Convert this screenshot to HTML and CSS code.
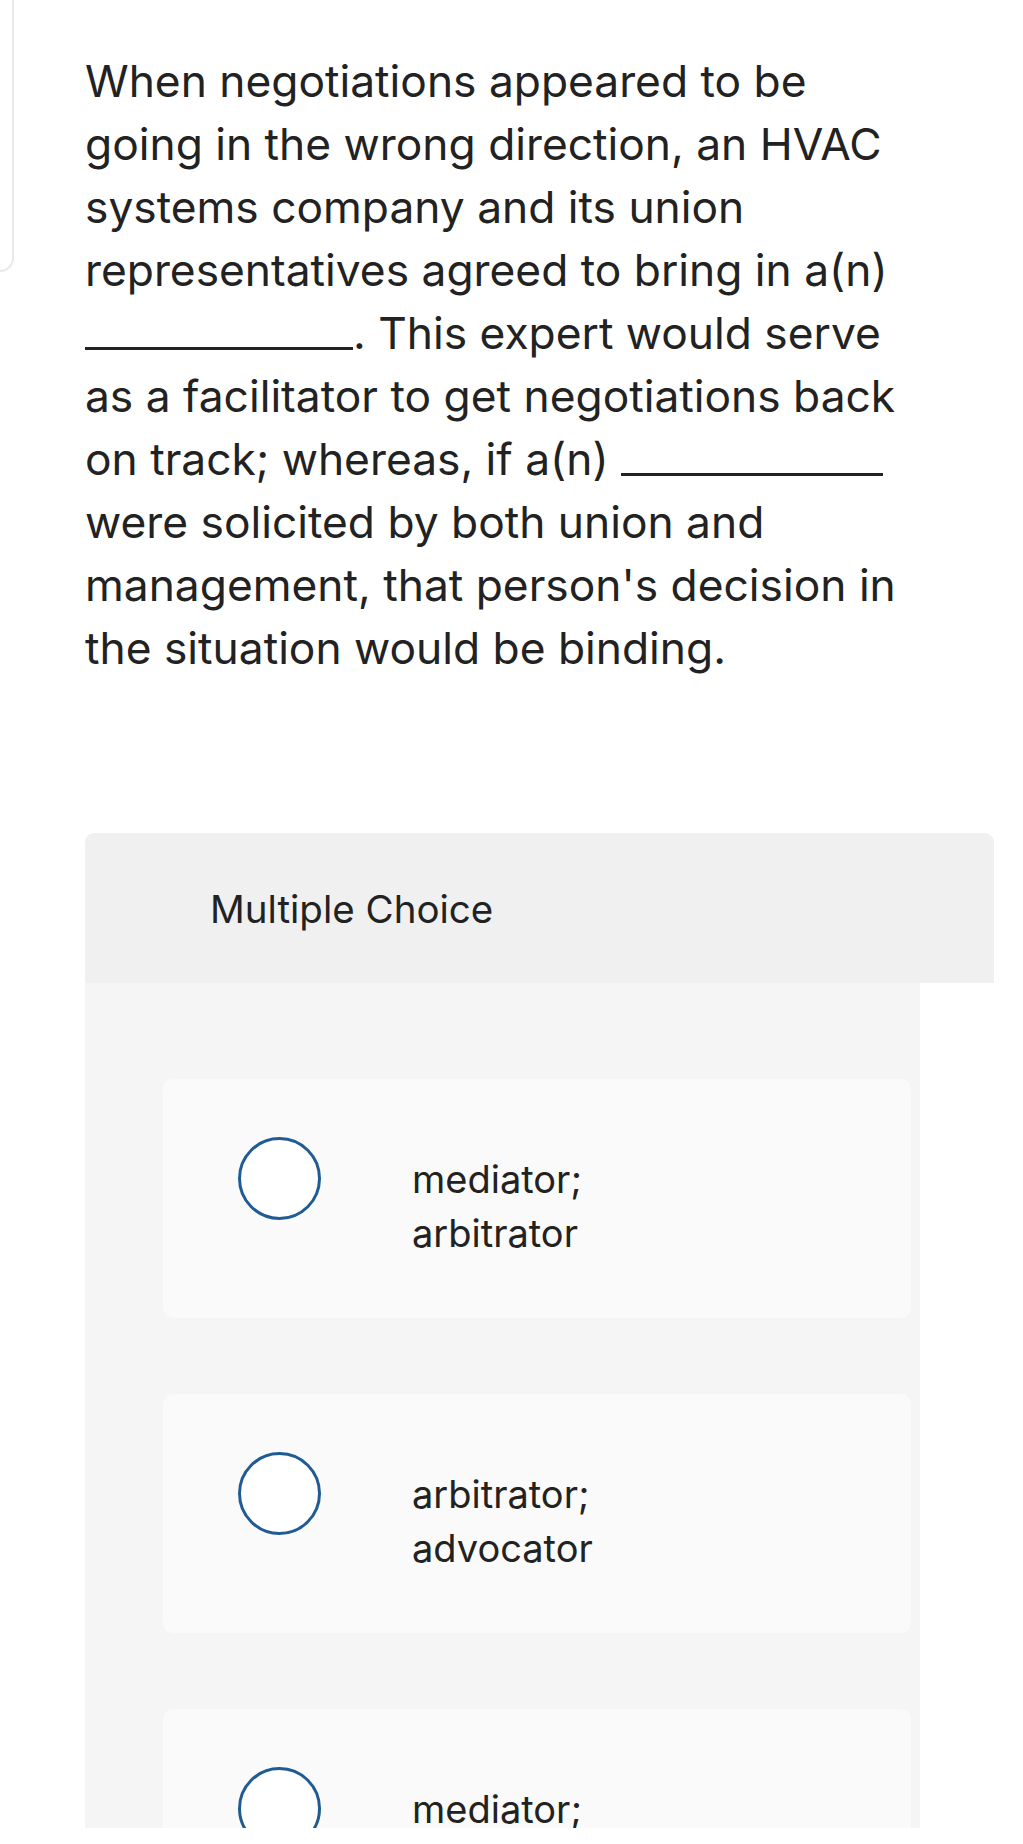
FILE: index.html
```html
<!DOCTYPE html>
<html lang="en">
<head>
<meta charset="utf-8">
<title>Multiple Choice</title>
<link rel="stylesheet" href="styles.css">
</head>
<body>
<div class="page">
  <div class="side-panel"></div>
  <main class="question">
    <p class="prompt">When negotiations appeared to be going in the wrong direction, an HVAC systems company and its union representatives agreed to bring in a(n) <span class="blank blank-a"></span>. This expert would serve as a facilitator to get negotiations back on track; whereas, if a(n) <span class="blank blank-b"></span> were solicited by both union and management, that person's decision in the situation would be binding.</p>

    <section class="choices">
      <header class="choices-head">Multiple Choice</header>
      <div class="choices-body">
        <div class="option">
          <span class="radio"></span>
          <span class="option-text">mediator;<br>arbitrator</span>
        </div>
        <div class="option">
          <span class="radio"></span>
          <span class="option-text">arbitrator;<br>advocator</span>
        </div>
        <div class="option">
          <span class="radio"></span>
          <span class="option-text">mediator;<br>advocator</span>
        </div>
      </div>
    </section>
  </main>
</div>
</body>
</html>
```
FILE: styles.css
```css
* { box-sizing: border-box; }

html, body {
  margin: 0;
  padding: 0;
  background: #ffffff;
}

body {
  font-family: "Inter", "Liberation Sans", Arial, sans-serif;
  color: #222222;
}

.page {
  position: relative;
  height: 1828px;
  overflow: hidden;
}

.side-panel {
  position: absolute;
  left: -30px;
  top: -30px;
  width: 44px;
  height: 302px;
  border: 2px solid #e9e9e9;
  border-radius: 14px;
}

.question {
  padding: 50px 0 0 85px;
}

.prompt {
  margin: 0;
  width: 825px;
  font-size: 44.3px;
  line-height: 63px;
  font-weight: 400;
}

.blank {
  display: inline-block;
  height: 3px;
  border-bottom: 3px solid #222222;
  vertical-align: -1px;
}

.blank-a { width: 268px; }
.blank-b { width: 262px; }

.choices {
  margin-top: 153px;
  width: 909px;
}

.choices-head {
  background: #f0f0f0;
  border-radius: 9px 9px 0 0;
  height: 150px;
  padding: 53px 0 0 125px;
  font-size: 38.5px;
  line-height: 46px;
}

.choices-body {
  width: 835px;
  background: #f5f5f5;
  padding: 96px 9px 40px 78px;
  display: flex;
  flex-direction: column;
  gap: 76px;
}

.option {
  display: flex;
  align-items: flex-start;
  height: 239px;
  background: #fafafa;
  border-radius: 10px;
  padding: 58px 0 0 75px;
}

.radio {
  flex: 0 0 auto;
  width: 83px;
  height: 83px;
  border-radius: 50%;
  border: 3px solid #205b94;
  background: #ffffff;
}

.option-text {
  margin: 15px 0 0 91px;
  font-size: 38px;
  line-height: 54px;
}
```
